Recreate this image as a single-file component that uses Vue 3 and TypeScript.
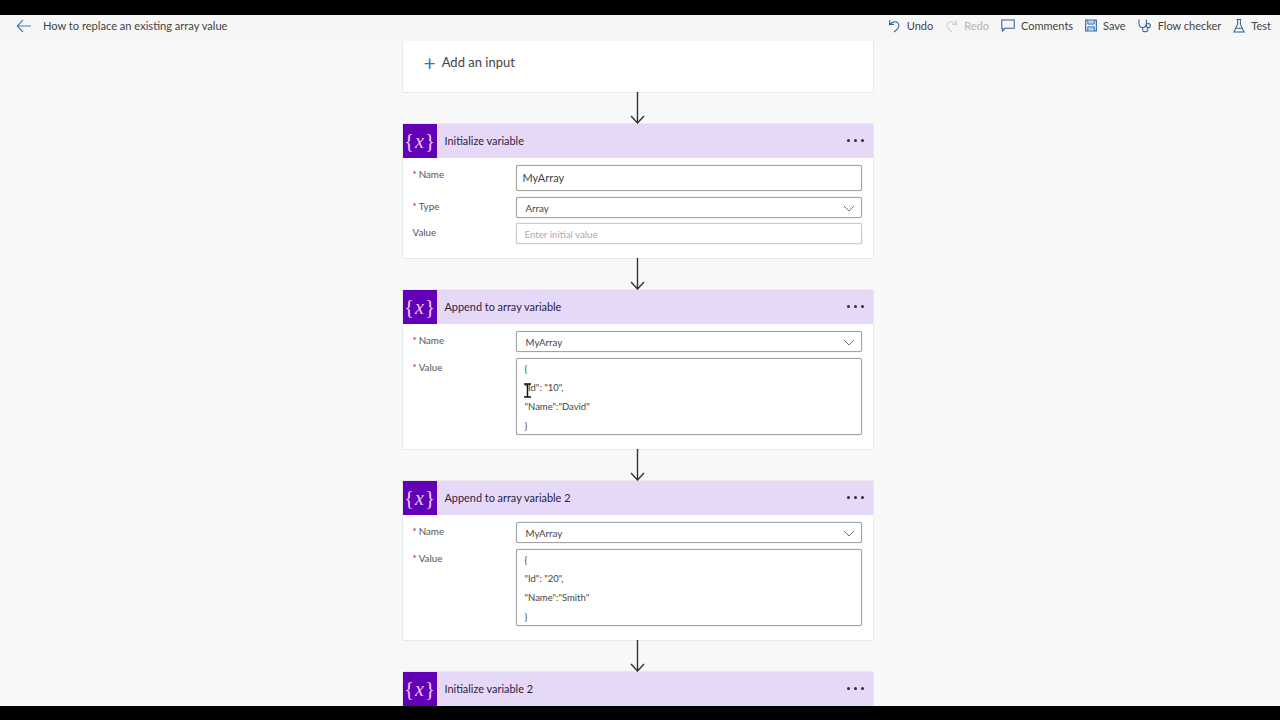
<script setup lang="ts">
interface Row { label: string; req: boolean; kind: 'nameinput' | 'select' | 'input' | 'code'; value?: string | string[]; }
interface Card { title: string; rows: Row[]; }
const cards: Card[] = [
  { title: 'Initialize variable', rows: [
    { label: 'Name', req: true, kind: 'nameinput', value: 'MyArray' },
    { label: 'Type', req: true, kind: 'select', value: 'Array' },
    { label: 'Value', req: false, kind: 'input', value: 'Enter initial value' },
  ] },
  { title: 'Append to array variable', rows: [
    { label: 'Name', req: true, kind: 'select', value: 'MyArray' },
    { label: 'Value', req: true, kind: 'code', value: ['{', '"Id": "10",', '"Name":"David"', '}'] },
  ] },
  { title: 'Append to array variable 2', rows: [
    { label: 'Name', req: true, kind: 'select', value: 'MyArray' },
    { label: 'Value', req: true, kind: 'code', value: ['{', '"Id": "20",', '"Name":"Smith"', '}'] },
  ] },
  { title: 'Initialize variable 2', rows: [] },
];
const tools = ['Undo', 'Redo', 'Comments', 'Save', 'Flow checker', 'Test'];
</script>

<template>
  <div class="page">
    <div class="black top"></div>
    <header class="bar">
      <div class="left">
        <svg class="back" width="16" height="14" viewBox="0 0 16 14"><path d="M7 1 1.200 7 7 13M1.200 7H15" fill="none" stroke="#4a7ab5" stroke-width="1.100"/></svg>
        <span class="flow-title">How to replace an existing array value</span>
      </div>
      <div class="tools">
        <div v-for="t in tools" :key="t" class="tool" :class="{ off: t === 'Redo' }">
          <svg v-if="t === 'Undo'" width="13" height="16" viewBox="0 0 14 16"><path d="M2 1.500 1.500 6.500 6.500 6M1.500 6.500C4 3.500 8 2.500 10.500 4.500 13 7 12 10.500 6.500 14.500" fill="none" stroke="#2f5f9c" stroke-width="1.100"/></svg>
          <svg v-else-if="t === 'Redo'" width="13" height="16" viewBox="0 0 14 16"><path d="M12 1.500 12.500 6.500 7.500 6M12.500 6.500C10 3.500 6 2.500 3.500 4.500 1 7 2 10.500 7.500 14.500" fill="none" stroke="#cfcfcf" stroke-width="1.100"/></svg>
          <svg v-else-if="t === 'Comments'" width="14" height="15" viewBox="0 0 15 15"><path d="M.8 1.500H14.200V10.500H4.200L1.500 13.300V10.500H.8Z" fill="none" stroke="#2f5f9c" stroke-width="1.100"/></svg>
          <svg v-else-if="t === 'Save'" width="12" height="13" viewBox="0 0 13 13"><path d="M.7.7H12.300V12.300H.7Z" fill="none" stroke="#2f6cb0" stroke-width="1.300"/><path d="M3 1V5H10V1M3 12V8H10V12" fill="#b9d0ea" stroke="#2f6cb0"/></svg>
          <svg v-else-if="t === 'Flow checker'" width="14" height="16" viewBox="0 0 15 16"><path d="M1 1V5C1 8 3 9.500 5 9.500S9 8 9 5V1M5 9.500V12.500C5 14.500 9.500 15 10.500 12.500V10" fill="none" stroke="#2f5f9c" stroke-width="1.100"/><circle cx="11" cy="7.500" r="2.200" fill="none" stroke="#2f5f9c" stroke-width="1.100"/></svg>
          <svg v-else width="12" height="16" viewBox="0 0 13 16"><path d="M4 1H9M5 1V6L1 14.500H12L8 6V1M3 10.500H10" fill="none" stroke="#2f5f9c" stroke-width="1.100"/></svg>
          <span>{{ t }}</span>
        </div>
      </div>
    </header>
    <main class="canvas">
      <section class="card first">
        <div class="add"><span class="plus">+</span><span>Add an input</span></div>
      </section>
      <template v-for="c in cards" :key="c.title">
        <svg class="arrow" width="16" height="32" viewBox="0 0 16 32"><path d="M7.500 0V31M1 24 7.500 31 14 24" fill="none" stroke="#333" stroke-width="1.400"/></svg>
        <section class="card">
          <div class="head">
            <div class="badge"><span class="brace">{</span><i>x</i><span class="brace">}</span></div>
            <span class="name">{{ c.title }}</span>
            <div class="dots"><b></b><b></b><b></b></div>
          </div>
          <div v-if="c.rows.length" class="body">
            <div v-for="r in c.rows" :key="r.label" class="row" :class="r.kind">
              <div class="label"><span v-if="r.req" class="req">*</span>{{ r.label }}</div>
              <div class="field">
                <template v-if="r.kind === 'code'">
                  <div v-for="l in r.value" :key="l" class="line">{{ l }}</div>
                </template>
                <template v-else>
                  <span>{{ r.value }}</span>
                  <svg v-if="r.kind === 'select'" class="chev" width="12" height="7" viewBox="0 0 12 7"><path d="M1 1 6 6 11 1" fill="none" stroke="#777" stroke-width="1"/></svg>
                </template>
              </div>
            </div>
          </div>
        </section>
      </template>
      <svg class="cursor" width="9" height="15" viewBox="0 0 9 15"><path d="M1 1H8M1 14H8M4.500 1V14" fill="none" stroke="#111" stroke-width="1.500"/></svg>
    </main>
    <div class="black bottom"></div>
  </div>
</template>

<style>
html, body { margin: 0; background: #000; }
</style>

<style scoped>
.page { width: 1280px; height: 720px; display: flex; flex-direction: column; overflow: hidden; font-family: Lato, "Open Sans", sans-serif; color: #333; background: #f8f8f8; }
.black { background: #000; flex: none; }
.top { height: 15px; }
.bottom { height: 14px; }
.bar { height: 26px; box-sizing: border-box; padding-bottom: 5px; flex: none; display: flex; justify-content: space-between; align-items: center; background: #f6f6f6; font-size: 11px; color: #444; }
.left { display: flex; align-items: center; padding-left: 16px; gap: 11px; }
.flow-title { font-size: 11.100px; }
.tools { display: flex; align-items: center; gap: 12px; padding-right: 9px; }
.tool { display: flex; align-items: center; gap: 6px; }
.tool.off { color: #b5b5b5; }
.canvas { position: relative; flex: 1; min-height: 0; overflow: hidden; display: flex; flex-direction: column; align-items: center; padding-right: 5px; }
.card { width: 470px; box-sizing: border-box; background: #fff; flex: none; box-shadow: 0 0 1px rgba(0,0,0,.35); }
.first { height: 51px; display: flex; align-items: center; padding-bottom: 9px; }
.add { display: flex; align-items: center; gap: 6px; padding-left: 21px; font-size: 13px; color: #444; }
.plus { color: #2a7fa8; font-size: 21px; line-height: 19px; font-weight: 400; }
.arrow { flex: none; display: block; }
.head { height: 34px; background: #e6d8f7; display: flex; align-items: center; }
.badge { width: 34px; height: 34px; background: #6200b8; color: #e9c8f5; display: flex; align-items: center; justify-content: center; font-family: "Liberation Serif", serif; font-size: 20px; flex: none; }
.brace { font-size: 21px; }
.badge i { margin: 0 1px; }
.name { font-size: 10.900px; color: #2b2440; margin-left: 8px; flex: 1; padding-bottom: 1px; }
.dots { display: flex; gap: 4px; padding-right: 9px; padding-bottom: 1px; }
.dots b { width: 3px; height: 3px; border-radius: 50%; background: #32264f; }
.body { padding: 7px 11px 14px 10px; display: flex; flex-direction: column; gap: 6px; }
.row { display: flex; }
.label { width: 103px; flex: none; font-size: 9.800px; color: #555; padding-top: 3px; }
.req { color: #a4262c; margin-right: 2px; }
.field { flex: 1; box-sizing: border-box; position: relative; border: 1px solid #a3a3a3; border-radius: 2px; background: #fff; font-size: 9.700px; color: #444; padding-left: 9px; display: flex; align-items: center; box-shadow: 0 0 1px rgba(0,0,0,.4); }
.nameinput .field { height: 26px; font-size: 11px; padding-left: 6px; padding-bottom: 1px; }
.select .field { height: 21px; }
.input { margin-top: -1px; }
.input .field { height: 21px; color: #aaa; border-color: #ccc; padding-left: 8px; }
.code .field { height: 77px; display: block; padding-top: 1px; padding-left: 8px; font-size: 9.500px; }
.line { height: 18.900px; line-height: 18.900px; white-space: nowrap; }
.chev { position: absolute; right: 6px; top: 7px; }
.cursor { position: absolute; left: 523px; top: 342px; }
</style>
